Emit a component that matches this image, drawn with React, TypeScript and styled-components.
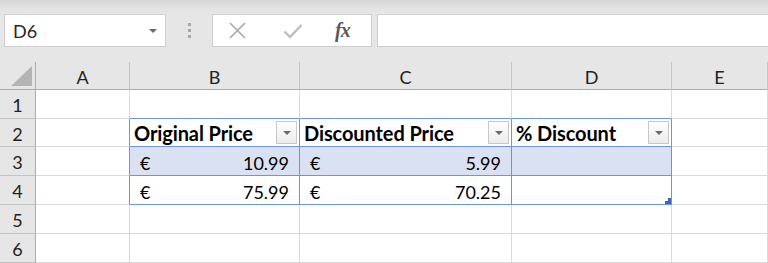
import React from 'react';
import styled, { createGlobalStyle } from 'styled-components';

const GlobalStyle = createGlobalStyle`
	html, body {
		margin: 0;
		padding: 0;
		background: #ffffff;
	}
	body {
		width: 768px;
		height: 263px;
		overflow: hidden;
		font-family: Lato, 'Liberation Sans', sans-serif;
	}
`;

const GRID = '#dadada';
const HEAD_LINE = '#c4c4c4';
const BLUE = '#6f94d8';
const BAND = '#d9e1f2';

const Window = styled.div`
	width: 768px;
	height: 263px;
	display: flex;
	flex-direction: column;
	overflow: hidden;
`;

const FormulaBar = styled.div`
	height: 63px;
	box-sizing: border-box;
	padding: 14px 0 15px 4px;
	display: flex;
	align-items: stretch;
	background: linear-gradient(#d6d6d6 0px, #e4e4e4 9px, #e6e6e6 14px);
`;

const NameBox = styled.div`
	width: 162px;
	box-sizing: border-box;
	background: #fff;
	border: 1px solid #cfcfcf;
	display: flex;
	align-items: center;
	justify-content: space-between;
	padding: 0 8px 0 8px;
	font-size: 18px;
	color: #262626;
`;

const Caret = styled.span`
	width: 0;
	height: 0;
	border-left: 4px solid transparent;
	border-right: 4px solid transparent;
	border-top: 4px solid #6a6a6a;
`;

const Grip = styled.div`
	width: 46px;
	display: flex;
	flex-direction: column;
	align-items: center;
	justify-content: center;
	gap: 3px;
	span {
		width: 3px;
		height: 3px;
		background: #a8a8a8;
	}
`;

const ButtonBox = styled.div`
	width: 160px;
	box-sizing: border-box;
	background: #fff;
	border: 1px solid #cfcfcf;
	display: flex;
	align-items: center;
	padding-left: 15px;
`;

const IconSlot = styled.div<{ $w: number }>`
	width: ${(p) => p.$w}px;
	display: flex;
	align-items: center;
`;

const Fx = styled.span`
	font-family: 'Liberation Serif', 'DejaVu Serif', serif;
	font-style: italic;
	font-weight: bold;
	font-size: 20px;
	color: #5a5a5a;
	letter-spacing: -1px;
`;

const FormulaInput = styled.div`
	flex: 1;
	margin-left: 5px;
	background: #fff;
	border: 1px solid #cfcfcf;
	border-right: none;
`;

const Sheet = styled.div`
	display: grid;
	grid-template-columns: 36px 94px 170px 212px 160px 96px;
	grid-template-rows: 28px 29px 28px 29px 29px 29px 29px;
`;

const ColHead = styled.div`
	background: #e6e6e6;
	border-right: 1px solid ${HEAD_LINE};
	border-bottom: 1px solid #ababab;
	box-sizing: border-box;
	display: flex;
	align-items: center;
	justify-content: center;
	font-size: 18px;
	color: #222;
	padding-top: 2px;
`;

const Corner = styled(ColHead)`
	position: relative;
	border-right: 1px solid #ababab;
	&::after {
		content: '';
		position: absolute;
		right: 3px;
		bottom: 3px;
		width: 0;
		height: 0;
		border-left: 21px solid transparent;
		border-bottom: 20px solid #b4b4b4;
	}
`;

const RowHead = styled.div`
	background: #e6e6e6;
	border-right: 1px solid #ababab;
	border-bottom: 1px solid ${HEAD_LINE};
	box-sizing: border-box;
	display: flex;
	align-items: center;
	justify-content: center;
	font-size: 18px;
	color: #222;
	padding-top: 2px;
`;

const Cell = styled.div<{ $r?: string; $b?: string; $bg?: string }>`
	position: relative;
	box-sizing: border-box;
	background: ${(p) => p.$bg || '#fff'};
	border-right: 1px solid ${(p) => p.$r || GRID};
	border-bottom: 1px solid ${(p) => p.$b || GRID};
	display: flex;
	align-items: center;
	justify-content: space-between;
	padding: 3px 10px 0 4px;
	font-size: 18px;
	color: #000;
	white-space: nowrap;
	overflow: hidden;
`;

const HeaderCell = styled(Cell)`
	padding: 1px 2px 0 4px;
	font-size: 20px;
	font-weight: 700;
	letter-spacing: -0.1px;
`;

const Currency = styled.span`
	padding-left: 6px;
`;

const FilterButton = styled.div`
	width: 21px;
	height: 23px;
	box-sizing: border-box;
	border: 1px solid #c8c8c8;
	background: linear-gradient(#ffffff, #ececec);
	display: flex;
	align-items: center;
	justify-content: center;
	margin-bottom: 1px;
`;

const ResizeHandle = styled.span`
	position: absolute;
	right: 0;
	bottom: 0;
	width: 6px;
	height: 6px;
	background: #3c64c0;
	clip-path: polygon(100% 0, 100% 100%, 0 100%, 0 50%, 50% 50%, 50% 0);
`;

const Cross = () => (
	<svg width="19" height="19" viewBox="0 0 19 19">
		<path d="M2 2 L17 17 M17 2 L2 17" stroke="#a9a9a9" strokeWidth="1.6" fill="none" />
	</svg>
);

const Check = () => (
	<svg width="20" height="16" viewBox="0 0 20 16">
		<path d="M1.5 8.5 L7 14 L18.5 2" stroke="#bdbdbd" strokeWidth="2.4" fill="none" />
	</svg>
);

const columns = ['A', 'B', 'C', 'D', 'E'];

const tableHeads = ['Original Price', 'Discounted Price', '% Discount'];

const rows: { b: string; c: string }[] = [
	{ b: '10.99', c: '5.99' },
	{ b: '75.99', c: '70.25' },
];

const App = () => {
	return (
		<>
			<GlobalStyle />
			<Window>
				<FormulaBar>
					<NameBox>
						D6
						<Caret />
					</NameBox>
					<Grip>
						<span />
						<span />
						<span />
					</Grip>
					<ButtonBox>
						<IconSlot $w={55}>
							<Cross />
						</IconSlot>
						<IconSlot $w={52}>
							<Check />
						</IconSlot>
						<IconSlot $w={30}>
							<Fx>fx</Fx>
						</IconSlot>
					</ButtonBox>
					<FormulaInput />
				</FormulaBar>

				<Sheet>
					<Corner />
					{columns.map((c) => (
						<ColHead key={c}>{c}</ColHead>
					))}

					{/* row 1 */}
					<RowHead>1</RowHead>
					<Cell />
					<Cell $b={BLUE} />
					<Cell $b={BLUE} />
					<Cell $b={BLUE} />
					<Cell />

					{/* row 2: table header */}
					<RowHead>2</RowHead>
					<Cell $r={BLUE} />
					{tableHeads.map((h) => (
						<HeaderCell key={h} $r={BLUE} $b={BLUE}>
							{h}
							<FilterButton>
								<Caret />
							</FilterButton>
						</HeaderCell>
					))}
					<Cell />

					{rows.map((r, i) => {
						const bg = i === 0 ? BAND : '#fff';
						const last = i === rows.length - 1;
						return (
							<React.Fragment key={i}>
								<RowHead>{i + 3}</RowHead>
								<Cell $r={BLUE} />
								<Cell $r={BLUE} $b={BLUE} $bg={bg}>
									<Currency>€</Currency>
									<span>{r.b}</span>
								</Cell>
								<Cell $r={BLUE} $b={BLUE} $bg={bg}>
									<Currency>€</Currency>
									<span>{r.c}</span>
								</Cell>
								<Cell $r={BLUE} $b={BLUE} $bg={bg}>
									{last && <ResizeHandle />}
								</Cell>
								<Cell />
							</React.Fragment>
						);
					})}

					{[5, 6].map((n) => (
						<React.Fragment key={n}>
							<RowHead>{n}</RowHead>
							<Cell />
							<Cell />
							<Cell />
							<Cell />
							<Cell />
						</React.Fragment>
					))}
				</Sheet>
			</Window>
		</>
	);
};

export default App;
